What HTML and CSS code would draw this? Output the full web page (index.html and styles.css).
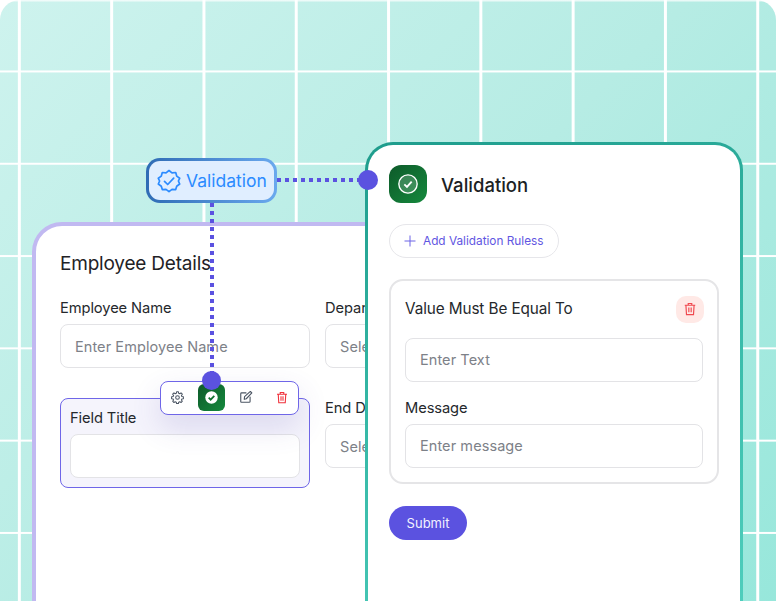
FILE: index.html
```html
<!DOCTYPE html>
<html lang="en">
<head>
<meta charset="utf-8">
<title>Validation</title>
<link rel="stylesheet" href="styles.css">
</head>
<body>
<main class="stage">
  <section class="card card-left">
    <h2 class="left-title">Employee Details</h2>
    <div class="form-grid">
      <div class="field">
        <span class="label">Employee Name</span>
        <div class="input">Enter Employee Name</div>
      </div>
      <div class="field">
        <span class="label">Department</span>
        <div class="input">Select</div>
      </div>
      <div class="field field-active">
        <span class="label">Field Title</span>
        <div class="input"></div>
      </div>
      <div class="field">
        <span class="label">End Date</span>
        <div class="input">Select</div>
      </div>
    </div>
  </section>

  <div class="dots dots-v"></div>

  <div class="toolbar">
    <svg class="tool" viewBox="0 0 24 24" fill="none" stroke="#4b5563" stroke-width="1.9" stroke-linejoin="round"><path d="M10.300 1.500h3.400l.5 2.800 2 .8 2.300-1.600 2.400 2.400-1.600 2.300.8 2 2.800.5v3.400l-2.800.5-.8 2 1.600 2.300-2.400 2.400-2.300-1.600-2 .8-.5 2.800h-3.400l-.5-2.800-2-.8-2.300 1.600-2.400-2.400 1.600-2.300-.8-2-2.800-.5v-3.400l2.800-.5.8-2-1.600-2.300 2.400-2.400 2.300 1.600 2-.8z"/><circle cx="12" cy="12" r="3.400"/></svg>
    <span class="tool-green">
      <svg viewBox="0 0 24 24" width="13" height="13"><circle cx="12" cy="12" r="11.500" fill="#fff"/><path d="M6.800 12.400l3.600 3.600L17.200 9" fill="none" stroke="#12702f" stroke-width="3.200"/></svg>
    </span>
    <svg class="tool tool-edit" viewBox="0 0 24 24" fill="none" stroke="#4b5563" stroke-width="1.900" stroke-linejoin="round" stroke-linecap="round"><path d="M12 5H4.500A1.500 1.500 0 0 0 3 6.500V20a1 1 0 0 0 1 1h13.500a1.500 1.500 0 0 0 1.500-1.500V12"/><path d="M9.500 11.500L19.500 2.500l2.500 2.500-9.500 10-3.500 1z"/></svg>
    <svg class="tool tool-trash" viewBox="0 0 24 24" fill="none" stroke="#f0323c" stroke-width="2.200"><path d="M2 5.500h20M8.500 5.500V2h7v3.500M4.500 5.500l1 17h13l1-17M10 9.500v9M14 9.500v9"/></svg>
  </div>
  <div class="dot dot-tool"></div>

  <div class="chip">
    <svg class="chip-icon" viewBox="0 0 24 24" fill="none" stroke="#2b8bff" stroke-width="1.700" stroke-linejoin="round" stroke-linecap="round"><path d="M12 1.500l3 2.300 3.700-.3 1 3.600 3 2.200-1.300 2.700 1.300 3-3 2.200-1 3.400-3.700-.2-3 2.300-3-2.300-3.700.2-1-3.400-3-2.200 1.300-3L1.300 9.300l3-2.200 1-3.600 3.700.3z"/><path d="M7.500 12.300l3.200 3.200 6-6.300"/></svg>
    <span>Validation</span>
  </div>
  <div class="dots dots-h"></div>

  <section class="card card-right">
    <header class="right-head">
      <span class="badge">
        <svg viewBox="0 0 24 24" width="22" height="22" fill="rgba(255,255,255,.18)" stroke="#fff" stroke-width="1.500"><circle cx="12" cy="12" r="10"/><path d="M8 12.300l2.900 2.900L16 9.500" fill="none" stroke-width="2"/></svg>
      </span>
      <h2 class="right-title">Validation</h2>
    </header>
    <div class="add-rule">
      <svg viewBox="0 0 12 12" width="12" height="12" fill="none" stroke="#6d65e6" stroke-width="1"><path d="M6 .5v11M.5 6h11"/></svg>
      <span>Add Validation Ruless</span>
    </div>
    <div class="rule">
      <div class="rule-head">
        <span class="label rule-name">Value Must Be Equal To</span>
        <span class="rule-del">
          <svg viewBox="0 0 24 24" width="14" height="14" fill="none" stroke="#f0494f" stroke-width="2"><path d="M3 5.500h18M9 5.500V2.500h6v3M5 5.500l1 16h12l1-16M10 9.500v8M14 9.500v8"/></svg>
        </span>
      </div>
      <div class="input">Enter Text</div>
      <span class="label rule-label">Message</span>
      <div class="input">Enter message</div>
    </div>
    <div class="submit">Submit</div>
  </section>

  <div class="dot dot-card"></div>
</main>
</body>
</html>
```
FILE: styles.css
```css
* { box-sizing: border-box; }
html, body { margin: 0; padding: 0; background: #fff; }
body { font-family: Inter, "Noto Sans", sans-serif; color: #1f2226; }

.stage {
  position: relative;
  width: 776px;
  height: 601px;
  overflow: hidden;
  border-radius: 20px 20px 0 0;
  background-color: #b5ece3;
  background-image:
    linear-gradient(rgba(255,255,255,.7), rgba(255,255,255,.7)),
    linear-gradient(to right, transparent 18px, #fff 18px, #fff 20.500px, transparent 20.500px),
    linear-gradient(to bottom, transparent 70px, #fff 70px, #fff 72.500px, transparent 72.500px),
    linear-gradient(135deg, #cef3ee 0%, #b6ece4 50%, #97e7db 100%);
  background-size: 776px 1.500px, 92.300px 100%, 100% 92.300px, 100% 100%;
  background-repeat: no-repeat, repeat-x, repeat-y, no-repeat;
  background-position: 0 0, 0 0, 0 0, 0 0;
}

/* cards */
.card { position: absolute; background: #fff; border-style: solid; }
.card-left {
  left: 32px; top: 222px; width: 480px; height: 420px;
  border-width: 4px; border-color: #c1b9f1; border-radius: 30px;
  padding: 24px 24px 0;
}
.card-right {
  left: 365px; top: 142px; width: 378px; height: 500px;
  border: 3px solid transparent; border-radius: 28px;
  background:
    linear-gradient(#fff, #fff) padding-box,
    linear-gradient(160deg, #1e9c8c, #36b9a7 45%, #52d0bf) border-box;
  padding: 20px 21px 0;
}

.left-title { margin: 0 0 20px; font-size: 19px; line-height: 28px; font-weight: 400; letter-spacing: -.2px; }
.form-grid { display: grid; grid-template-columns: 250px 250px; column-gap: 15px; row-gap: 30px; }
.field { display: flex; flex-direction: column; gap: 6px; }
.field-active {
  height: 90px; padding: 9px 9px 0;
  border: 1px solid #6f66e8; border-radius: 8px;
  background: #f5f4fc;
}
.field-active .input { background: #fff; }

.label { font-size: 14.700px; line-height: 20px; color: #25282c; letter-spacing: -.1px; }
.rule-name { font-size: 15.300px; }
.input {
  height: 44px; padding: 0 14px;
  display: flex; align-items: center;
  border: 1px solid #e3e3e6; border-radius: 8px;
  background: #fff;
  font-size: 14.500px; color: #7d8188; letter-spacing: .08px;
  white-space: nowrap;
}
.rule .input { padding-bottom: 2px; }

/* right card */
.right-head { display: flex; align-items: center; gap: 14px; margin-bottom: 21px; }
.badge {
  width: 38px; height: 38px; border-radius: 12px;
  display: flex; align-items: center; justify-content: center;
  background: linear-gradient(135deg, #0e5a2a, #15893d);
}
.right-title { margin: 0; padding-top: 2px; font-size: 18.500px; line-height: 28px; font-weight: 500; color: #1c1f23; }
.add-rule {
  width: 170px; height: 34px; margin-bottom: 21px;
  display: flex; align-items: center; gap: 7px; padding-left: 14px;
  border: 1px solid #e6e6ea; border-radius: 17px;
  font-size: 11.800px; color: #5f56e2;
}
.rule {
  width: 330px; height: 205px; padding: 14px 14px 0;
  display: flex; flex-direction: column;
  border: 2px solid #e5e5e7; border-radius: 14px;
}
.rule-head { display: flex; justify-content: space-between; align-items: center; height: 28px; margin-bottom: 15px; }
.rule-del {
  width: 28px; height: 27px; margin-right: -1px; border-radius: 10px;
  background: #ffe9e6;
  display: flex; align-items: center; justify-content: center;
}
.rule-label { margin: 16px 0 6px; }
.submit {
  width: 78px; height: 34px; margin-top: 22px;
  display: flex; align-items: center; justify-content: center;
  border-radius: 17px;
  background: #5b52e0; color: #f2f1ff;
  font-size: 13px;
}

/* overlays */
.chip {
  position: absolute; left: 146px; top: 158px; width: 131px; height: 45px;
  display: flex; align-items: center; gap: 5px; padding-left: 8px;
  border: 3px solid transparent; border-radius: 14px;
  background:
    linear-gradient(#e0eeff, #e0eeff) padding-box,
    linear-gradient(to right, #2f6cb5, #6aa9ee) border-box;
  color: #2b8bff;
  font-size: 17.500px;
}
.chip-icon { width: 24px; height: 24px; flex: none; }

.dots { position: absolute; }
.dots-h {
  left: 277px; top: 178px; width: 84px; height: 4px;
  background: repeating-linear-gradient(to right, #5b52e0 0 4px, transparent 4px 8px);
}
.dots-v {
  left: 210px; top: 203px; width: 4px; height: 170px;
  background: repeating-linear-gradient(to bottom, #5b52e0 0 4px, transparent 4px 8px);
}
.dot { position: absolute; border-radius: 50%; background: #5b52e0; }
.dot-card { left: 358px; top: 170px; width: 20px; height: 20px; }
.dot-tool { left: 202px; top: 371px; width: 19px; height: 19px; }

.toolbar {
  position: absolute; left: 160px; top: 381px; width: 139px; height: 34px;
  display: flex; align-items: center; gap: 14px; padding: 0 0 2px 10px;
  background: #fff;
  border: 1.500px solid #6f66e8; border-radius: 8px;
  box-shadow: 0 12px 30px rgba(80, 70, 170, .16);
}
.tool { width: 13px; height: 13px; flex: none; }
.tool-edit { width: 14px; height: 14px; }
.tool-trash { margin-left: 9px; width: 12px; height: 13px; }
.tool-green {
  width: 27px; height: 27px; border-radius: 6px; flex: none;
  display: flex; align-items: center; justify-content: center;
  background: linear-gradient(135deg, #0e5a2a, #15893d);
}
```
